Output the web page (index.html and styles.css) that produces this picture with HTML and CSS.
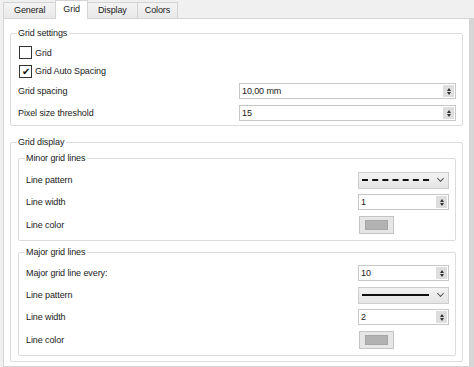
FILE: index.html
```html
<!DOCTYPE html>
<html lang="en">
<head>
    <meta charset="UTF-8">
    <title>Grid Options</title>
    <link rel="stylesheet" href="styles.css">
</head>
<body>
<div class="window">
    <div class="tabs">
        <div class="tab">General</div>
        <div class="tab active">Grid</div>
        <div class="tab">Display</div>
        <div class="tab">Colors</div>
    </div>

    <div class="content">
        <div class="panel">
            <fieldset class="group settings">
                <legend>Grid settings</legend>
                <label class="check-row"><span class="checkbox"></span>Grid</label>
                <label class="check-row short"><span class="checkbox checked">&#10004;</span>Grid Auto Spacing</label>
                <div class="row">
                    <span>Grid spacing</span>
                    <div class="spin wide"><span class="value">10,00 mm</span><span class="arrows"><i class="up"></i><i class="down"></i></span></div>
                </div>
                <div class="row">
                    <span>Pixel size threshold</span>
                    <div class="spin wide"><span class="value">15</span><span class="arrows"><i class="up"></i><i class="down"></i></span></div>
                </div>
            </fieldset>

            <fieldset class="group display">
                <legend>Grid display</legend>
                <fieldset class="group inner minor">
                    <legend>Minor grid lines</legend>
                    <div class="row">
                        <span>Line pattern</span>
                        <div class="combo"><span class="line dashed"></span><span class="chev"></span></div>
                    </div>
                    <div class="row">
                        <span>Line width</span>
                        <div class="spin"><span class="value">1</span><span class="arrows"><i class="up"></i><i class="down"></i></span></div>
                    </div>
                    <div class="row color-row">
                        <span>Line color</span>
                        <div class="color-btn"><span class="swatch"></span></div>
                    </div>
                </fieldset>
                <fieldset class="group inner major">
                    <legend>Major grid lines</legend>
                    <div class="row">
                        <span>Major grid line every:</span>
                        <div class="spin"><span class="value">10</span><span class="arrows"><i class="up"></i><i class="down"></i></span></div>
                    </div>
                    <div class="row">
                        <span>Line pattern</span>
                        <div class="combo"><span class="line solid"></span><span class="chev"></span></div>
                    </div>
                    <div class="row">
                        <span>Line width</span>
                        <div class="spin"><span class="value">2</span><span class="arrows"><i class="up"></i><i class="down"></i></span></div>
                    </div>
                    <div class="row color-row">
                        <span>Line color</span>
                        <div class="color-btn"><span class="swatch"></span></div>
                    </div>
                </fieldset>
            </fieldset>
        </div>
        <div class="edge"></div>
    </div>
</div>
</body>
</html>
```

FILE: styles.css
```css
body {
    margin: 0;
    background: #f0f0f0;
    font-family: 'Liberation Sans', Arial, sans-serif;
    font-size: 9px;
    letter-spacing: -0.1px;
    color: #1a1a1a;
}
.window {
    width: 474px;
    height: 367px;
    background: #f0f0f0;
    padding-left: 3px;
    box-sizing: border-box;
}
.tabs {
    display: flex;
    height: 18px;
    align-items: flex-end;
}
.tab {
    height: 15px;
    line-height: 15px;
    padding: 0 10px;
    border: 1px solid #d4d4d4;
    border-bottom: none;
    border-left: none;
    background: linear-gradient(#f4f4f4, #e8e8e8);
}
.tab:first-child {
    border-left: 1px solid #d4d4d4;
}
.tab:last-child {
    padding: 0 7px;
}
.tab.active {
    height: 18px;
    line-height: 16px;
    margin-bottom: -1px;
    background: white;
    border-left: 1px solid #d4d4d4;
    margin-left: -1px;
    padding: 0 7px;
    position: relative;
}
.content {
    display: flex;
    height: 349px;
}
.panel {
    width: 467px;
    background: white;
    border: 1px solid #d4d4d4;
    box-sizing: border-box;
    padding: 8px 6px 0 6px;
}
.edge {
    flex: 1;
    background: #d6d6d6;
}
.group {
    border: 1px solid #dcdcdc;
    border-radius: 2px;
    margin: 0;
    padding: 0 6px 0 7px;
}
.group legend {
    padding: 0 2px 0 1px;
    margin-left: -1px;
    line-height: 12px;
}
.settings {
    padding-top: 4px;
    padding-bottom: 1px;
}
.display {
    margin-top: 10px;
    padding: 4px 6px 5px 7px;
}
.minor {
    padding-top: 5px;
    padding-bottom: 4px;
}
.major {
    margin-top: 5px;
    padding-top: 4px;
    padding-bottom: 4px;
}
.check-row {
    display: flex;
    align-items: center;
    height: 19px;
}
.check-row.short {
    height: 18px;
}
.checkbox {
    width: 11px;
    height: 11px;
    border: 1px solid #333;
    margin: 0 3px 0 1px;
    font-size: 10px;
    line-height: 11px;
    text-align: center;
    color: #111;
}
.row {
    display: flex;
    justify-content: space-between;
    align-items: center;
    height: 22px;
}
.color-row {
    height: 23px;
}
.spin {
    width: 89px;
    height: 14px;
    border: 1px solid #c8c8c8;
    display: flex;
    background: white;
}
.spin.wide {
    width: 215px;
}
.value {
    flex: 1;
    line-height: 14px;
    padding-left: 2px;
}
.arrows {
    width: 11px;
    margin: 1px;
    background: #dedede;
    display: flex;
    flex-direction: column;
    align-items: center;
    justify-content: center;
    gap: 1px;
}
.arrows i {
    width: 0;
    height: 0;
    border-left: 2px solid transparent;
    border-right: 2px solid transparent;
}
.arrows .up {
    border-bottom: 3px solid #333;
}
.arrows .down {
    border-top: 3px solid #333;
}
.combo {
    width: 82px;
    height: 15px;
    border: 1px solid #cdcdcd;
    background: linear-gradient(#f3f3f3, #e4e4e4);
    display: flex;
    align-items: center;
    padding: 0 4px 0 3px;
    gap: 9px;
}
.line {
    flex: 1;
    height: 0;
}
.dashed {
    border-top: 2px dashed #111;
}
.solid {
    border-top: 2px solid #111;
}
.chev {
    width: 4px;
    height: 4px;
    border-right: 1px solid #555;
    border-bottom: 1px solid #555;
    transform: rotate(45deg);
    margin: -3px 1px 0 0;
}
.color-btn {
    width: 33px;
    height: 16px;
    border: 1px solid #c4c4c4;
    background: #e6e6e6;
    display: flex;
    align-items: center;
    justify-content: center;
    margin-right: 55px;
}
.swatch {
    width: 21px;
    height: 8px;
    background: #b2b2b2;
    border: 1px solid #a6a6a6;
}
```
